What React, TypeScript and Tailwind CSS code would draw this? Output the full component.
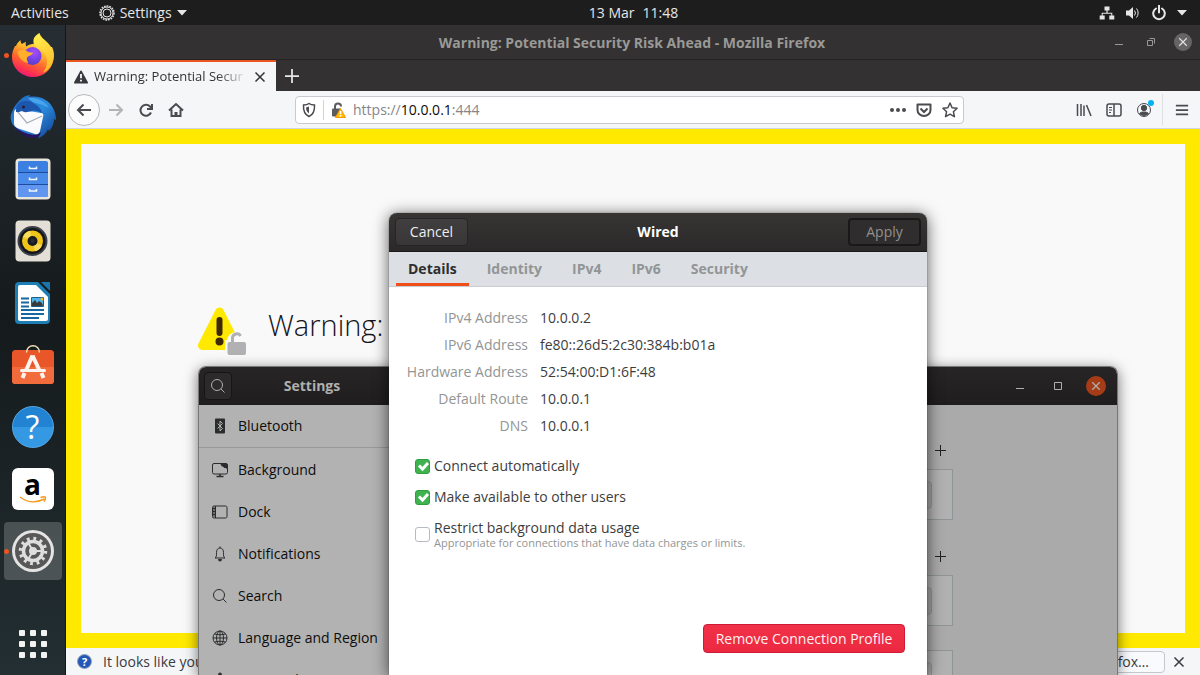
import { useState } from 'react'
import type { ReactNode } from 'react'

// ─── Data ─────────────────────────────────────────────────────────────────────

const TABS = ['Details', 'Identity', 'IPv4', 'IPv6', 'Security']

const DETAILS = [
  { label: 'IPv4 Address',     value: '10.0.0.2' },
  { label: 'IPv6 Address',     value: 'fe80::26d5:2c30:384b:b01a' },
  { label: 'Hardware Address', value: '52:54:00:D1:6F:48' },
  { label: 'Default Route',    value: '10.0.0.1' },
  { label: 'DNS',              value: '10.0.0.1' },
]

// ─── Dock icons ───────────────────────────────────────────────────────────────

function FirefoxLogo() {
  return (
    <svg viewBox="0 0 44 44" className="size-11">
      <defs>
        <linearGradient id="ff-body" x1="0.8" y1="0" x2="0.3" y2="1">
          <stop offset="0" stopColor="#fff44f" />
          <stop offset="0.35" stopColor="#ffb52a" />
          <stop offset="0.6" stopColor="#ff6a2c" />
          <stop offset="0.85" stopColor="#ff2f52" />
          <stop offset="1" stopColor="#e31587" />
        </linearGradient>
        <radialGradient id="ff-globe" cx="0.6" cy="0.3" r="0.7">
          <stop offset="0" stopColor="#a84dff" />
          <stop offset="0.6" stopColor="#7542e5" />
          <stop offset="1" stopColor="#5a3fc4" />
        </radialGradient>
        <linearGradient id="ff-tail" x1="0" y1="0" x2="0.3" y2="1">
          <stop offset="0" stopColor="#fff44f" />
          <stop offset="1" stopColor="#ffbd2e" />
        </linearGradient>
      </defs>
      <path fill="url(#ff-body)" d="M5 13c1-3 3-4.500 4.500-6 0 2 .5 3 1.500 4 1-.8 2-1.500 4-2-.5 1.500-.3 3 .2 4.500C20 10 26 10 30 13l11 1c2 4 2.500 8 1.500 13-2 10-10 17-20.500 17S1.500 36 1 25c-.2-4 .8-8 3-12z" />
      <path fill="url(#ff-tail)" d="M28.500 0c1 4 5 6.500 8 9.500 5 5 7 11 5.500 18-1.500 6-5 10-10 12 3-4 4.500-8 4-13-.4-5-4-8-8-10.500-4-2.500-6-5-5.500-9C23 3.500 26 1.500 28.500 0z" />
      <circle cx="21.500" cy="23" r="9" fill="url(#ff-globe)" />
      <path fill="#ffae2b" d="M6.500 19c3-2.500 7-2.500 10-.5 2 1.200 4.500.8 5.500 1.200-.5 2.500-4 2.700-5.500 4.300-1.500 1.500-.5 4 1 6-5-.500-10-4.500-11-11z" />
    </svg>
  )
}

function ThunderbirdLogo() {
  return (
    <svg viewBox="0 0 46 44" className="h-11 w-[46px]">
      <defs>
        <linearGradient id="tb" x1="0" y1="0" x2="1" y2="1">
          <stop offset="0" stopColor="#1f5fb8" />
          <stop offset="0.5" stopColor="#2b8de0" />
          <stop offset="1" stopColor="#123a8c" />
        </linearGradient>
      </defs>
      <path fill="url(#tb)" d="M9 6c3-4 8-6 11-6l-1 2c10-2 20 3 24 11 2 4 3 8 3 12l-2-1c0 5-2 9-5 12l-1-2c-2 5-6 8-10 9l2-4C20 42 8 38 4 31 0 27 0 20 2 17c1-4 4-8 7-11z" />
      <path fill="#fbfbfd" d="M7 14l24 4c2 0 3 2 2 4l-3 14c-1 3-3 4-5 3L7 33c-2-1-3-3-3-5L4 18c0-2 1-4 3-4z" />
      <path d="M7 16l10 12 15-7" fill="none" stroke="#a9acb4" strokeWidth="1.200" />
      <path fill="#1c57ad" d="M8 9c5-4 11-4 15-1 4 2 8 5 9 10-4-2-7-3-10-2-4 1-7 2-10 0-2 1-4 1-6 1 0-3 0-6 2-8z" />
      <path fill="#49a6ee" d="M18 3c8-1 17 3 21 10-6-4-12-4-16-6-2-1-4-3-5-4z" />
      <circle cx="13.500" cy="12" r="1.500" fill="#2a1d33" />
      <path fill="#271463" d="M4 31c6 5 12 8 20 9 3 0 5-1 7-3-1 4-4 6-8 6C15 42 8 38 4 31z" />
    </svg>
  )
}

function FilesIcon() {
  return (
    <svg viewBox="0 0 36 42" className="h-[42px] w-9">
      <rect x="0.500" y="0.500" width="35" height="41" rx="4" fill="#e9e5dd" />
      <rect x="3" y="3" width="30" height="36" rx="2" fill="#3b7fe0" />
      <rect x="3" y="15" width="30" height="12" fill="#4a8bea" />
      <rect x="3" y="27" width="30" height="12" rx="1" fill="#6096f0" />
      <path d="M3 14.500h30M3 26.500h30" stroke="#1c4d9c" />
      <path d="M14.500 8.500v2h7v-2M14.500 19.500v2h7v-2M14.500 31v2h7v-2" fill="none" stroke="#f2f5fb" strokeWidth="1.500" />
    </svg>
  )
}

function RhythmboxIcon() {
  return (
    <svg viewBox="0 0 36 42" className="h-[42px] w-9">
      <rect x="0.500" y="0.500" width="35" height="41" rx="4" fill="#e3dfd6" />
      <circle cx="17.500" cy="21" r="15" fill="#3a3f49" />
      <circle cx="17.500" cy="21" r="13" fill="#15171c" />
      <circle cx="17.500" cy="21" r="10.500" fill="#f0c419" />
      <path d="M17.500 21L8 16.500a10.500 10.500 0 0 1 7-5.700zM17.500 21l9.500 4.500a10.500 10.500 0 0 1-7 5.700z" fill="#f9dc55" />
      <circle cx="17.500" cy="21" r="5" fill="#1a1c22" />
      <circle cx="17.500" cy="21" r="2" fill="#2b2e36" />
    </svg>
  )
}

function WriterIcon() {
  return (
    <svg viewBox="0 0 36 42" className="h-[42px] w-9">
      <path fill="#1d7db5" d="M4 0h19l12 12v26a4 4 0 0 1-4 4H4a4 4 0 0 1-4-4V4a4 4 0 0 1 4-4z" />
      <path fill="#fff" d="M5 3h16l12 12v22a2 2 0 0 1-2 2H5a2 2 0 0 1-2-2V5a2 2 0 0 1 2-2z" />
      <path fill="#1b75ad" d="M26 0h9v9z" />
      <path d="M6 16.500h8M6 20.500h8M6 24.500h8M6 28h23M6 32h23M6 36h18" stroke="#1767a0" strokeWidth="2" />
      <path fill="#4fb3ea" stroke="#1c5f8c" d="M16.500 15.500h12v9h-12z" />
      <path fill="#3a3a3a" d="M17 24v-3l3-3 2 3 2-2 3 2 1 3z" />
      <circle cx="27" cy="17" r="1.500" fill="#f5b21b" />
    </svg>
  )
}

function SoftwareIcon() {
  return (
    <svg viewBox="0 0 42 40" className="h-10 w-[42px]">
      <rect y="5" width="42" height="34" rx="3.500" fill="#e9562a" />
      <path d="M0 22h42v13.500a3.500 3.500 0 0 1-3.500 3.500h-35A3.500 3.500 0 0 1 0 35.500z" fill="#f26b3c" />
      <path d="M14.500 7.500c0-9 13-9 13 0" fill="none" stroke="#f4e3b5" strokeWidth="1.500" />
      <g fill="none" stroke="#fdf3ee" strokeWidth="4">
        <path d="M20.500 10.500l-6.500 15M20.500 10.500l7 15" />
        <path d="M9.500 25.500h23" strokeWidth="3" strokeLinecap="round" />
        <path d="M12.500 28l-2 5M29.500 28l2 5" />
      </g>
    </svg>
  )
}

function GearIcon() {
  return (
    <svg viewBox="0 0 42 42" className="size-[42px]">
      <circle cx="21" cy="21" r="21" fill="#e4e4e4" />
      <circle cx="21" cy="21" r="18" fill="#585858" />
      <circle cx="21" cy="21" r="12.500" fill="none" stroke="#dedede" strokeWidth="3.500" strokeDasharray="2.800 3.745" />
      <circle cx="21" cy="21" r="9.500" fill="none" stroke="#dedede" strokeWidth="3.500" />
      <circle cx="21" cy="21" r="4" fill="#dedede" />
      <path d="M21 21h10M21 21l-5-8.500M21 21l-5 8.500" stroke="#dedede" strokeWidth="2" />
    </svg>
  )
}

// ─── Line icons ───────────────────────────────────────────────────────────────

function Line({ children, className = 'size-4', width = 2 }: { children: ReactNode; className?: string; width?: number }) {
  return (
    <svg viewBox="0 0 16 16" fill="none" stroke="currentColor" strokeWidth={width} className={`shrink-0 ${className}`}>
      {children}
    </svg>
  )
}

const Cross = ({ className = 'size-3', width = 2 }: { className?: string; width?: number }) => (
  <Line className={className} width={width}><path d="M2 2l12 12M14 2L2 14" /></Line>
)

const SearchGlyph = ({ className = 'size-4' }: { className?: string }) => (
  <Line className={className} width={1}><circle cx="7" cy="7" r="5.500" /><path d="M11 11l3.500 3.500" /></Line>
)

const SIDEBAR = [
  {
    name: 'Background',
    icon: (
      <Line width={1}>
        <rect x="0.500" y="1.500" width="15" height="10.500" rx="1.500" />
        <path d="M8.500 2h6.500v5c-1-1.500-2.500-.500-3-1.500S9.500 5 8.500 2z" fill="currentColor" stroke="none" />
        <path d="M8 12v2.500M4.500 14.500h7" strokeWidth="1.500" />
      </Line>
    ),
  },
  {
    name: 'Dock',
    icon: (
      <Line width={1}>
        <rect x="0.500" y="2" width="14.500" height="12" rx="1.500" />
        <path d="M3.500 2v12" /><path d="M2 3.500v9.500" strokeWidth="2" strokeDasharray="2 1" />
      </Line>
    ),
  },
  {
    name: 'Notifications',
    icon: (
      <Line width={1}>
        <path d="M3 12c1.500-1 1.500-2 1.500-5.500C4.500 3.500 6 2 8 2s3.500 1.500 3.500 4.500c0 3.500 0 4.500 1.500 5.500zM8 .5V2" />
        <path d="M6.500 13.500h3a1.500 1.500 0 0 1-3 0z" fill="currentColor" />
      </Line>
    ),
  },
  { name: 'Search', icon: <SearchGlyph /> },
  {
    name: 'Language and Region',
    icon: (
      <Line width={1}>
        <circle cx="8" cy="8" r="7" /><ellipse cx="8" cy="8" rx="3.500" ry="7" />
        <path d="M8 1v14M1 8h14M2.500 4c3 1 8 1 11 0M2.500 12c3-1 8-1 11 0" />
      </Line>
    ),
  },
  {
    name: 'Universal Access',
    icon: <Line width={1}><circle cx="8" cy="2.500" r="1.500" fill="currentColor" /><path d="M2 6h12M8 6v4l-3 5M8 10l3 5" /></Line>,
  },
]

const DOCK = [
  { name: 'Firefox', icon: <FirefoxLogo />, running: true },
  { name: 'Thunderbird', icon: <ThunderbirdLogo /> },
  { name: 'Files', icon: <FilesIcon /> },
  { name: 'Rhythmbox', icon: <RhythmboxIcon /> },
  { name: 'Writer', icon: <WriterIcon /> },
  { name: 'Software', icon: <SoftwareIcon /> },
  {
    name: 'Help',
    icon: (
      <span className="flex size-[42px] items-center justify-center rounded-full border border-[#55a9e8] bg-linear-to-b from-[#2283d2] from-50% to-[#3598e3] to-50% text-[32px] leading-none text-white">
        ?
      </span>
    ),
  },
  {
    name: 'Amazon',
    icon: (
      <span className="flex size-[42px] flex-col items-center rounded-md bg-white pt-1 text-black">
        <span className="h-6 text-[28px] leading-6 font-bold">a</span>
        <svg viewBox="0 0 28 8" className="h-2 w-7 shrink-0" fill="none" stroke="#f59a1b" strokeWidth="1.500">
          <path d="M1 1c8 6 17 6 24 2M21.500 1.500c3-1 5-1 5 0s-.5 2.500-1.500 4" />
        </svg>
      </span>
    ),
  },
  { name: 'Settings', icon: <GearIcon />, running: true, active: true },
]

// ─── Top bar ──────────────────────────────────────────────────────────────────

function TopBar() {
  return (
    <header className="grid h-[25px] shrink-0 grid-cols-[1fr_auto_1fr] items-center bg-[#1d1d1d] text-sm text-[#e6e6e6]">
      <div className="flex items-center gap-[30px] pl-[11px]">
        <button>Activities</button>
        <button className="flex items-center gap-[5px]">
          <svg viewBox="0 0 16 16" className="size-4" fill="none" stroke="currentColor">
            <circle cx="8" cy="8" r="7" strokeWidth="1.500" strokeDasharray="1.700 1" />
            <circle cx="8" cy="8" r="6" /><circle cx="8" cy="8" r="4" />
          </svg>
          Settings
          <svg viewBox="0 0 10 6" className="h-1.5 w-2.5" fill="currentColor"><path d="M0 0h10L5 5.500z" /></svg>
        </button>
      </div>
      <button className="flex gap-2 pl-[67px]"><span>13 Mar</span><span>11:48</span></button>
      <div className="flex items-center justify-end gap-2.5 pr-[13px]">
        <svg viewBox="0 0 16 16" className="size-4" fill="currentColor">
          <path d="M5.500 1.500h5v4H8.600v2.200h4.700v2.800h2v4h-5v-4h2V8.700H3.700v1.800h2v4h-5v-4h2V7.700h4.700V5.500h-1.900z" />
        </svg>
        <svg viewBox="0 0 16 16" className="size-4" fill="currentColor">
          <path d="M1 5.500h3L8 2v12l-4-3.500H1z" />
          <path d="M9.500 5.500a4 4 0 0 1 0 5M11.500 3.500a7 7 0 0 1 0 9" fill="none" stroke="currentColor" />
        </svg>
        <Line className="size-4"><path d="M5 3.500a5.800 5.800 0 1 0 6 0M8 .5v7" strokeLinecap="round" /></Line>
        <svg viewBox="0 0 10 6" className="h-1.5 w-2.5" fill="currentColor"><path d="M0 0h10L5 5.500z" /></svg>
      </div>
    </header>
  )
}

function Dock() {
  return (
    <nav className="flex w-[66px] shrink-0 flex-col items-center gap-1 border-r border-[#12142a] bg-linear-to-b from-[#262e34] via-[#151a1c] via-45% to-[#232f33] pt-px pb-0.5">
      {DOCK.map(app => (
        <button
          key={app.name}
          aria-label={app.name}
          className={`relative flex size-[58px] items-center justify-center rounded-sm ${app.active ? 'bg-white/20' : ''}`}
        >
          {app.running && <span className="absolute top-[27px] left-0 size-[5px] rounded-full bg-[#e95420]" />}
          {app.icon}
        </button>
      ))}
      <button aria-label="Show Applications" className="mt-auto flex size-[58px] items-center justify-center">
        <span className="grid grid-cols-3 gap-[5px]">
          {Array.from({ length: 9 }, (_, i) => <span key={i} className="size-1.5 rounded-[1px] bg-[#f2f2f2]" />)}
        </span>
      </button>
    </nav>
  )
}

// ─── Firefox ──────────────────────────────────────────────────────────────────

function BrowserChrome() {
  return (
    <>
      <div className="flex h-[35px] shrink-0 items-center border-b border-[#242223] bg-[#333132] pr-2 text-[#9a9996]">
        <h2 className="flex-1 pt-0.5 pl-[88px] text-center text-sm font-bold">
          Warning: Potential Security Risk Ahead - Mozilla Firefox
        </h2>
        <div className="flex gap-3.5">
          <button aria-label="Minimize" className="flex size-[18px] items-center justify-center">
            <Line className="size-2" width={2}><path d="M0 13h16" /></Line>
          </button>
          <button aria-label="Restore" className="flex size-[18px] items-center justify-center">
            <Line className="size-2" width={2}><path d="M1 5h10v10H1zM5 1h10v10" /></Line>
          </button>
          <button aria-label="Close" className="flex size-[18px] items-center justify-center rounded-full bg-[#666464] text-[#e0e0e0]">
            <Cross className="size-2.5" />
          </button>
        </div>
      </div>
      <div className="flex h-[31px] shrink-0 bg-[#333132]">
        <div className="flex w-[210px] items-center gap-1.5 border-t-2 border-[#e95420] bg-[#f5f6f7] pr-2.5 pl-2 text-[#333]">
          <svg viewBox="0 0 16 16" className="size-3.5 shrink-0">
            <path d="M8 1.500L15 14.500H1z" fill="#38383d" stroke="#38383d" strokeWidth="2" strokeLinejoin="round" />
            <path d="M8 4.500v5M8 11v2" stroke="#fff" strokeWidth="2" />
          </svg>
          <span className="min-w-0 flex-1 mask-r-from-80% text-[13px] whitespace-nowrap">Warning: Potential Secur</span>
          <button aria-label="Close tab"><Cross /></button>
        </div>
        <button aria-label="New tab" className="flex w-8 items-center justify-center text-[#e8e8e8]">
          <Line className="size-3.5" width={2}><path d="M8 0v16M0 8h16" /></Line>
        </button>
      </div>
      <div className="flex h-[38px] shrink-0 items-center border-b border-[#cfd3e4] bg-[#f5f6f8] text-[#4a4a4f]">
        <button aria-label="Back" className="ml-0.5 flex size-8 items-center justify-center rounded-full border border-[#b8b8bb] bg-[#fcfcfd]">
          <Line><path d="M15 8H2M7.500 2.500L2 8l5.500 5.500" /></Line>
        </button>
        <button aria-label="Forward" className="flex w-[31px] justify-center text-[#b4b4b7]">
          <Line><path d="M1 8h13M8.500 2.500L14 8l-5.500 5.500" /></Line>
        </button>
        <button aria-label="Reload" className="flex w-[30px] justify-center">
          <Line><path d="M13 10.500A5.500 5.500 0 1 1 12 4.500l1.500 2" /><path d="M14 2v5H9" /></Line>
        </button>
        <button aria-label="Home" className="flex w-[30px] justify-center">
          <Line><path d="M1 8.500L8 2l7 6.500M3.500 7.500V14h9V7.500" /><path d="M8 14v-4" strokeWidth="3" /></Line>
        </button>
        <div className="ml-[104px] flex h-7 flex-1 items-center rounded border border-[#c8cad0] bg-white px-[5px]">
          <Line width={1.5}><path d="M2.500 3c2 0 4-.3 5.500-1.500C9.500 2.700 11.500 3 13.500 3c.3 5-1 9.500-5.500 11.500C3.500 12.500 2.200 8 2.500 3z" /><path d="M8 4.500v7c-2-1.500-3-3.500-3-6z" fill="currentColor" stroke="none" /></Line>
          <span className="mx-1.5 h-5 w-px bg-[#d4d4d8]" />
          <svg viewBox="0 0 16 16" className="size-4 shrink-0">
            <path d="M5 7V4.500a3 3 0 0 1 6 0" fill="none" stroke="#5a5a5f" strokeWidth="2" />
            <rect x="2" y="6.500" width="9" height="8" rx="1" fill="#5a5a5f" />
            <path d="M10.500 6.500l5 9h-10z" fill="#ffbf00" stroke="#f59a00" strokeLinejoin="round" />
            <path d="M10.500 9v3M10.500 13v1.500" stroke="#fff" strokeWidth="1.500" />
          </svg>
          <a href="https://10.0.0.1:444" className="ml-[7px] flex-1 text-sm text-[#85858a]">
            https://<span className="text-[#0c0c0d]">10.0.0.1</span>:444
          </a>
          <div className="flex gap-2.5">
            <button aria-label="Page actions">
              <Line><g fill="currentColor" stroke="none"><circle cx="2" cy="8" r="2" /><circle cx="8" cy="8" r="2" /><circle cx="14" cy="8" r="2" /></g></Line>
            </button>
            <button aria-label="Save to Pocket">
              <Line><path d="M1.500 2.500h13V8c0 3.500-3 6-6.500 6s-6.500-2.500-6.500-6z" strokeLinejoin="round" /><path d="M4.500 6.500L8 10l3.500-3.500" /></Line>
            </button>
            <button aria-label="Bookmark">
              <Line width={1.5}><path d="M8 1l2.100 4.700 5 .5-3.700 3.500 1 5L8 12.200l-4.400 2.500 1-5L.9 6.200l5-.5z" strokeLinejoin="round" /></Line>
            </button>
          </div>
        </div>
        <div className="ml-28 flex items-center gap-3.5">
          <button aria-label="Library"><Line width={1.5}><path d="M1.500 2v12M5 2v12M8 3.500V14M10.500 3l4.500 11" /></Line></button>
          <button aria-label="Sidebars">
            <Line width={1.5}><rect x="1" y="2" width="14" height="12" rx="2" /><path d="M8 2v12" /><path d="M3 5.500h3M3 8h3M3 10.500h2" strokeWidth="1" /></Line>
          </button>
          <button aria-label="Account" className="relative">
            <Line width={1}><circle cx="8" cy="8" r="6.500" /><circle cx="8" cy="6" r="2.700" fill="currentColor" /><path d="M3.500 11.500c1-2 8-2 9 0-2 2.500-7 2.500-9 0z" fill="currentColor" /></Line>
            <span className="absolute -top-0.5 -right-0.5 size-1.5 rounded-full bg-[#00b3f4]" />
          </button>
        </div>
        <button aria-label="Menu" className="ml-2.5 flex h-[31px] w-[38px] items-center justify-center border-l border-[#dfe0e3]">
          <Line className="size-3.5"><path d="M1 3h14M1 8h14M1 13h14" /></Line>
        </button>
      </div>
    </>
  )
}

function Browser() {
  return (
    <section className="flex min-w-0 flex-1 flex-col">
      <BrowserChrome />
      <main className="flex min-h-0 flex-1 items-start gap-5 border-[15px] border-[#ffe900] bg-[#f9f9fa] pt-[159px] pl-[117px]">
        <svg viewBox="0 0 50 50" className="mt-1 size-[50px]">
          <path d="M21.500 5L4.500 38.500h34z" fill="#ffe900" stroke="#ffe900" strokeWidth="9" strokeLinejoin="round" />
          <path d="M21.500 13v13" stroke="#3e2800" strokeWidth="6" strokeLinecap="round" />
          <circle cx="21.500" cy="34.500" r="4" fill="#3e2800" />
          <rect x="27" y="33" width="24" height="20" fill="#f9f9fa" />
          <circle cx="38" cy="34" r="9" fill="#f9f9fa" />
          <rect x="29.500" y="35" width="18.500" height="13" rx="2" fill="#b1b1b3" />
          <path d="M34.500 35v-4c0-4 6-6 8-2" fill="none" stroke="#b1b1b3" strokeWidth="3" />
        </svg>
        <h1 className="text-[29px] leading-[44px] font-light text-[#15141a]">Warning:</h1>
      </main>
      <div className="flex h-[27px] shrink-0 items-center bg-[#f5f6f8] pr-[15px] pl-[11px] text-sm text-[#3a3a3f]">
        <span className="flex size-[15px] items-center justify-center rounded-full border border-[#9aa4b8] bg-[#2257b8] text-[11px] leading-none font-bold text-white">?</span>
        <span className="ml-[11px] flex-1">It looks like you</span>
        <button className="flex h-[22px] w-[120px] items-center justify-end rounded-sm border border-[#c4c7cc] bg-[#f9fafb] pr-[15px]">fox…</button>
        <button aria-label="Dismiss" className="ml-2"><Cross /></button>
      </div>
    </section>
  )
}

// ─── Settings window ──────────────────────────────────────────────────────────

function AddRow() {
  return (
    <div className="flex h-[38px] items-center justify-end pr-[5px] text-[#222]">
      <button aria-label="Add"><Line className="size-4" width={1}><path d="M8.500 3v11M3 8.500h11" /></Line></button>
    </div>
  )
}

function Card() {
  return (
    <div className="flex h-[51px] items-center justify-end border border-[#8f9497] bg-[#b1b1b1] pr-5">
      <button aria-label="Options" className="h-7 w-9 rounded-sm border border-[#8f9497] bg-[#a5a5a5]" />
    </div>
  )
}

function SettingsWindow() {
  return (
    <section className="absolute top-[366px] bottom-0 left-[198px] flex w-[920px] flex-col overflow-hidden rounded-t-lg border border-b-0 border-[#777] shadow-[0_3px_14px_rgba(0,0,0,0.55)]">
      <header className="flex h-[38px] shrink-0 items-center bg-linear-to-b from-[#272526] to-[#1f1d1e] text-[#b0afad]">
        <div className="grid w-[226px] grid-cols-[28px_1fr_28px] px-[5px]">
          <button aria-label="Search settings" className="flex size-7 items-center justify-center rounded border border-[#171616] bg-[#2c2a2b]">
            <SearchGlyph />
          </button>
          <h2 className="self-center text-center text-sm font-bold">Settings</h2>
        </div>
        <div className="flex flex-1 justify-end gap-[18px] pr-[11px]">
          <button aria-label="Minimize" className="flex size-5 items-center justify-center">
            <Line className="size-2" width={2}><path d="M0 13h16" /></Line>
          </button>
          <button aria-label="Maximize" className="flex size-5 items-center justify-center">
            <Line className="size-2" width={2}><path d="M1 1h14v14H1z" /></Line>
          </button>
          <button aria-label="Close" className="flex size-5 items-center justify-center rounded-full bg-[#a63c17]">
            <Cross className="size-2.5" />
          </button>
        </div>
      </header>
      <div className="flex min-h-0 flex-1">
        <nav className="w-[227px] shrink-0 border-r border-[#8f9294] bg-[#b2b2b2] text-sm text-[#0d0d0d]">
          <a href="#bluetooth" className="mb-px flex h-[43px] items-center gap-2.5 border-b border-[#979a9c] pl-[13px]">
            <svg viewBox="0 0 16 16" className="size-4">
              <rect x="3" y="0.500" width="10" height="15" rx="1" fill="#2a2c2d" />
              <path d="M5.500 5.500l5 5L8 13V3l2.500 2.500-5 5" fill="none" stroke="#b2b2b2" />
            </svg>
            Bluetooth
          </a>
          {SIDEBAR.map(item => (
            <a key={item.name} href={`#${item.name}`} className="flex h-[42px] items-center gap-2.5 pl-[13px]">
              <span className="text-[#2a2c2d]">{item.icon}</span>
              {item.name}
            </a>
          ))}
        </nav>
        <div className="flex flex-1 justify-center bg-[#aaa] pt-[26px]">
          <div className="w-[363px]">
            <AddRow />
            <Card />
            <div className="mt-[17px]"><AddRow /></div>
            <Card />
            <div className="mt-6"><Card /></div>
          </div>
        </div>
      </div>
    </section>
  )
}

// ─── Connection dialog ────────────────────────────────────────────────────────

function Check({ label, hint, initial }: { label: string; hint?: string; initial: boolean }) {
  const [on, setOn] = useState(initial)
  return (
    <label className="flex items-center gap-1">
      <span className="relative flex">
        <input
          type="checkbox"
          checked={on}
          onChange={e => setOn(e.target.checked)}
          className="size-[15px] appearance-none rounded-[3px] border border-[#b6bac2] bg-white checked:border-[#2f9e41] checked:bg-[#3eb34f]"
        />
        {on && (
          <svg viewBox="0 0 15 15" className="pointer-events-none absolute inset-0" fill="none" stroke="#fff" strokeWidth="3">
            <path d="M4 6.500l3.500 3.500L13 4" />
          </svg>
        )}
      </span>
      <span className="flex flex-col">
        <span className="leading-4">{label}</span>
        {hint && <span className="text-[11px] leading-[13px] text-[#929595]">{hint}</span>}
      </span>
    </label>
  )
}

function WiredDialog() {
  const [tab, setTab] = useState('Details')

  return (
    <section
      role="dialog"
      aria-label="Wired"
      className="absolute top-[213px] bottom-0 left-[389px] flex w-[538px] flex-col overflow-hidden rounded-t-lg bg-white text-sm text-[#3d3d3d] shadow-[0_2px_16px_rgba(0,0,0,0.65),0_0_1px_#222]"
    >
      <header className="flex h-[39px] shrink-0 items-center justify-between border-b border-[#1b1919] bg-linear-to-b from-[#373534] to-[#2b2929] px-1.5 text-white">
        <button className="h-7 w-[73px] rounded border border-[#262424] bg-linear-to-b from-[#403e3e] to-[#383636] text-[#eee]">Cancel</button>
        <h2 className="font-bold">Wired</h2>
        <button disabled className="h-7 w-[73px] rounded border-2 border-[#1a1818] bg-[#2f2d2d] text-[#929090]">Apply</button>
      </header>

      {/* Tabs */}
      <div role="tablist" className="flex h-[35px] shrink-0 gap-1.5 border-b border-[#c9cdd1] bg-[#dce0e5] px-[7px]">
        {TABS.map(t => (
          <button
            key={t}
            role="tab"
            aria-selected={tab === t}
            onClick={() => setTab(t)}
            className={`border-b-3 px-3 pt-0.5 text-sm font-bold ${
              tab === t ? 'border-[#f04e1a] text-[#2f2f2f]' : 'border-transparent text-[#929595]'
            }`}
          >
            {t}
          </button>
        ))}
      </div>

      <dl className="mt-[17px] grid auto-rows-[27px] grid-cols-[139px_1fr] items-center gap-x-3">
        {DETAILS.map(d => (
          <div key={d.label} className="contents">
            <dt className="text-right text-[#929595]">{d.label}</dt>
            <dd>{d.value}</dd>
          </div>
        ))}
      </dl>

      <div className="mt-[19px] flex flex-col gap-[15px] pl-[26px]">
        <Check label="Connect automatically" initial />
        <Check label="Make available to other users" initial />
        <Check
          label="Restrict background data usage"
          hint="Appropriate for connections that have data charges or limits."
          initial={false}
        />
      </div>

      <div className="mt-auto flex justify-end pr-[22px] pb-[22px]">
        <button className="h-[29px] w-[202px] rounded-sm border border-[#cf1a37] bg-linear-to-b from-[#f03248] to-[#ec2840] text-[#fff0f2]">
          Remove Connection Profile
        </button>
      </div>
    </section>
  )
}

export default function App() {
  return (
    <div className="relative flex h-screen flex-col overflow-hidden bg-[#151a1c] font-['Open_Sans','Noto_Sans',sans-serif]">
      <TopBar />
      <div className="flex min-h-0 flex-1">
        <Dock />
        <Browser />
      </div>
      <SettingsWindow />
      <WiredDialog />
    </div>
  )
}
